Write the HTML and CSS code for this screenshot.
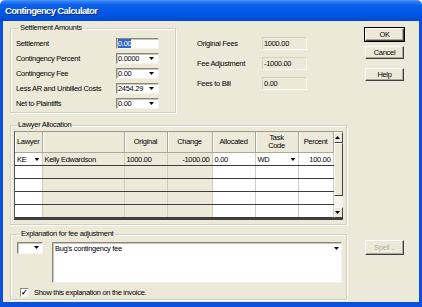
FILE: index.html
```html
<!DOCTYPE html>
<html lang="en">
<head>
    <meta charset="UTF-8">
    <title>Contingency Calculator</title>
    <link rel="stylesheet" href="styles.css">
</head>
<body>
    <div class="window">
        <div class="titlebar">Contingency Calculator</div>
        <div class="frame">
            <div class="client">
                <div class="main">
                    <div class="top">
                        <fieldset class="group settle">
                            <legend>Settlement Amounts</legend>
                            <div class="field"><label>Settlement</label><span class="edit"><span class="sel">0.00</span></span></div>
                            <div class="field"><label>Contingency Percent</label><span class="edit combo">0.0000<i class="arrow"></i></span></div>
                            <div class="field"><label>Contingency Fee</label><span class="edit combo">0.00<i class="arrow"></i></span></div>
                            <div class="field"><label>Less AR and Unbilled Costs</label><span class="edit combo">2454.29<i class="arrow"></i></span></div>
                            <div class="field"><label>Net to Plaintiffs</label><span class="edit combo">0.00<i class="arrow"></i></span></div>
                        </fieldset>
                        <div class="fees">
                            <div class="fee"><label>Original Fees</label><span class="readonly">1000.00</span></div>
                            <div class="fee"><label>Fee Adjustment</label><span class="readonly">-1000.00</span></div>
                            <div class="fee"><label>Fees to Bill</label><span class="readonly">0.00</span></div>
                        </div>
                    </div>

                    <fieldset class="group alloc">
                        <legend>Lawyer Allocation</legend>
                        <div class="gridwrap">
                            <table class="grid">
                                <colgroup>
                                    <col style="width:27px"><col style="width:82px"><col style="width:43px"><col style="width:45px">
                                    <col style="width:43px"><col style="width:43px"><col style="width:35px">
                                </colgroup>
                                <thead>
                                    <tr>
                                        <th class="left">Lawyer</th>
                                        <th></th>
                                        <th>Original</th>
                                        <th>Change</th>
                                        <th>Allocated</th>
                                        <th class="two">Task<br>Code</th>
                                        <th>Percent</th>
                                    </tr>
                                </thead>
                                <tbody>
                                    <tr>
                                        <td class="pick">KE<i class="arrow"></i></td>
                                        <td class="ro">Kelly Edwardson</td>
                                        <td class="ro">1000.00</td>
                                        <td class="ro num">-1000.00</td>
                                        <td>0.00</td>
                                        <td class="pick">WD<i class="arrow"></i></td>
                                        <td class="num">100.00</td>
                                    </tr>
                                    <tr><td></td><td class="ro"></td><td class="ro"></td><td class="ro"></td><td></td><td></td><td></td></tr>
                                    <tr><td></td><td class="ro"></td><td class="ro"></td><td class="ro"></td><td></td><td></td><td></td></tr>
                                    <tr><td></td><td class="ro"></td><td class="ro"></td><td class="ro"></td><td></td><td></td><td></td></tr>
                                    <tr><td></td><td class="ro"></td><td class="ro"></td><td class="ro"></td><td></td><td></td><td></td></tr>
                                </tbody>
                            </table>
                            <div class="vscroll">
                                <span class="sbtn"><i class="arrow up"></i></span>
                                <span class="thumb"></span>
                                <span class="track"></span>
                                <span class="sbtn"><i class="arrow"></i></span>
                            </div>
                        </div>
                    </fieldset>

                    <fieldset class="group explain">
                        <legend>Explanation for fee adjustment</legend>
                        <div class="explain-row">
                            <span class="edit combo small"><i class="arrow"></i></span>
                            <div class="memo">Bug's contingency fee<i class="arrow"></i></div>
                        </div>
                        <label class="check"><span class="box">&#10003;</span>Show this explanation on the invoice.</label>
                    </fieldset>
                </div>

                <div class="side">
                    <button class="btn default">OK</button>
                    <button class="btn">Cancel</button>
                    <button class="btn help">Help</button>
                    <button class="btn spell" disabled>Spell...</button>
                </div>
            </div>
        </div>
    </div>
</body>
</html>
```

FILE: styles.css
```css
body {
    margin: 0;
    font-family: "Liberation Sans", Arial, sans-serif;
    font-size: 7.5px;
    letter-spacing: -0.3px;
    color: #000;
    background: #fff;
}

.window {
    width: 422px;
    height: 307px;
    display: flex;
    flex-direction: column;
}

.titlebar {
    height: 21px;
    line-height: 22px;
    padding-left: 5px;
    color: #fff;
    font-size: 9.5px;
    font-weight: bold;
    letter-spacing: -0.65px;
    text-shadow: 1px 1px 0 #0a2a80;
    background: linear-gradient(to bottom, #4a9afc 0, #2b78f2 2px, #0c60ea 5px, #0057e6 12px, #0052dc 17px, #0049cc 21px);
    border-radius: 5px 5px 0 0;
}

.frame {
    flex: 1;
    display: flex;
    border: solid #0a4fde;
    border-width: 0 3px 5px 3px;
    box-shadow: inset 0 -1px 0 #003cb8;
}

.client {
    flex: 1;
    display: flex;
    background: #ece9d8;
    padding: 2px 0 0 7px;
}

.main {
    width: 337px;
}

/* group boxes */
.group {
    margin: 0;
    padding: 0;
    border: 1px solid #d0d0bf;
    box-shadow: inset 1px 1px 0 #fff, 1px 1px 0 #fff;
    min-width: 0;
}

.group legend {
    padding: 0 1px;
    margin-left: 3px;
    line-height: 10px;
}

.top {
    display: flex;
    align-items: flex-start;
}

.settle {
    width: 166px;
    box-sizing: border-box;
    padding: 5px 0 3px 5px;
}

.field {
    display: flex;
    align-items: center;
    height: 11px;
    margin-bottom: 4px;
}

.field:last-child {
    margin-bottom: 0;
}

.field label {
    width: 100px;
}

/* sunken edit boxes */
.edit {
    position: relative;
    display: block;
    box-sizing: border-box;
    width: 43px;
    height: 11px;
    line-height: 9px;
    padding-left: 1px;
    background: #fff;
    border: 1px solid;
    border-color: #8a877a #f4f3ee #f4f3ee #8a877a;
    box-shadow: inset 1px 1px 0 #c9c6b8;
}

.sel {
    background: #316ac5;
    color: #fff;
}

.arrow {
    position: absolute;
    right: 4px;
    top: 3px;
    width: 5px;
    height: 3px;
    background: #000;
    clip-path: polygon(0 0, 100% 0, 50% 100%);
}

.arrow.up {
    clip-path: polygon(50% 0, 100% 100%, 0 100%);
}

.fees {
    margin: 14px 0 0 21px;
}

.fee {
    display: flex;
    align-items: center;
    height: 13px;
    margin-bottom: 7px;
}

.fee label {
    width: 65px;
}

.readonly {
    box-sizing: border-box;
    width: 45px;
    height: 13px;
    line-height: 11px;
    padding-left: 1px;
    border: 1px solid;
    border-color: #d6d3c4 #fafaf6 #fafaf6 #d6d3c4;
}

/* lawyer allocation grid */
.alloc {
    margin-top: 7px;
    padding: 1px 3px 4px 3px;
}

.gridwrap {
    display: flex;
    border-left: 1px solid #555;
    border-top: 1px solid #9d9a8c;
    border-bottom: 2px solid #3f3f3f;
}

.grid {
    border-collapse: collapse;
    table-layout: fixed;
    width: 318px;
}

.grid th {
    height: 20px;
    padding: 0;
    font-weight: normal;
    background: #ece9d8;
    border-right: 1px solid #aca899;
    border-bottom: 1px solid #aca899;
    box-shadow: inset 1px 0 0 #fff;
    line-height: 8px;
}

.grid th.left {
    text-align: left;
    padding-left: 2px;
}

.grid td {
    position: relative;
    height: 12px;
    padding: 0 0 0 2px;
    background: #fff;
    border-right: 1px solid #cfcdc2;
    border-bottom: 1px solid #3c3c3c;
    white-space: nowrap;
}

.grid td.ro {
    background: #ece9d8;
}

.grid td.num {
    text-align: right;
    padding-right: 2px;
}

.grid .pick .arrow {
    top: 5px;
    right: 2px;
}

.vscroll {
    width: 11px;
    display: flex;
    flex-direction: column;
}

.sbtn {
    position: relative;
    height: 11px;
    box-sizing: border-box;
    background: #ece9d8;
    border: 1px solid;
    border-color: #fff #404040 #404040 #fff;
}

.sbtn .arrow {
    right: 2px;
    top: 3px;
}

.thumb {
    height: 53px;
    box-sizing: border-box;
    background: #ece9d8;
    border: 1px solid;
    border-color: #fff #404040 #404040 #fff;
}

.track {
    flex: 1;
    background: #f5f4ef;
}

/* explanation */
.explain {
    margin-top: 4px;
    padding: 3px 4px 2px 6px;
}

.explain-row {
    display: flex;
    align-items: flex-start;
}

.small {
    width: 26px;
    height: 12px;
}

.small .arrow {
    right: 3px;
    top: 3px;
}

.memo {
    position: relative;
    flex: 1;
    height: 41px;
    margin-left: 9px;
    box-sizing: border-box;
    padding: 1px 2px;
    background: #fff;
    border: 1px solid;
    border-color: #8a877a #f4f3ee #f4f3ee #8a877a;
    box-shadow: inset 1px 1px 0 #c9c6b8;
}

.memo .arrow {
    right: 2px;
    top: 4px;
}

.check {
    display: flex;
    align-items: center;
    margin: 5px 0 0 3px;
    height: 9px;
}

.check .box {
    width: 7px;
    height: 7px;
    margin-right: 5px;
    font-size: 8px;
    line-height: 7px;
    text-align: center;
    font-weight: bold;
    background: #fff;
    border: 1px solid;
    border-color: #8a877a #f4f3ee #f4f3ee #8a877a;
}

/* buttons */
.side {
    display: flex;
    flex-direction: column;
    margin-left: 18px;
    padding-top: 5px;
}

.btn {
    width: 39px;
    height: 13px;
    padding: 0;
    margin-bottom: 4px;
    font-family: inherit;
    font-size: 7.5px;
    letter-spacing: -0.3px;
    line-height: 10px;
    background: #ece9d8;
    border: 1px solid;
    border-color: #fff #404040 #404040 #fff;
    box-shadow: inset -1px -1px 0 #aca899;
}

.btn.default {
    outline: 1px solid #000;
    margin-bottom: 5px;
}

.btn.help {
    margin-top: 5px;
}

.btn.spell {
    height: 15px;
    margin-top: 155px;
    color: #aca899;
    text-shadow: 1px 1px 0 #fff;
}
```
